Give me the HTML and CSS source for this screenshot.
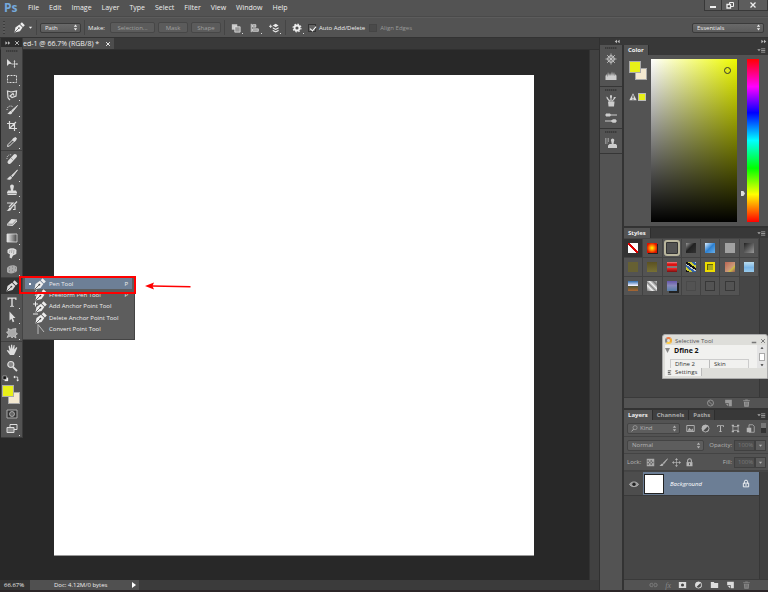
FILE: index.html
```html
<!DOCTYPE html>
<html lang="en">
<head>
<meta charset="utf-8">
<title>Photo editor</title>
<link rel="stylesheet" href="styles.css">
</head>
<body>
<svg class="sprite" aria-hidden="true">
  <symbol id="pen" viewBox="0 0 12 12"><path d="M.5 11.500 1.500 6 6 2.800 9.300 6 6.500 10Z" fill="currentColor"/><path d="M6.700 2.300 8.600.3 11.800 3.500 9.900 5.400Z" fill="currentColor"/><path d="M1 11 5 7" stroke="#444" stroke-width=".8"/><circle cx="5.400" cy="6.600" r=".9" fill="#444"/></symbol>
  <symbol id="move" viewBox="0 0 12 12"><path d="M1 2v7l2-2 3-.3Z" fill="currentColor"/><path d="M8.500 4v6M5.500 7h6" stroke="currentColor" stroke-width=".8"/><path d="m8.500 3 1 1.500h-2Zm0 8 1-1.500h-2ZM12 7l-1.500 1V6Z" fill="currentColor"/></symbol>
  <symbol id="marquee" viewBox="0 0 12 12"><path d="M1.500 2.500h9v7h-9Z" fill="none" stroke="currentColor" stroke-dasharray="2 1"/></symbol>
  <symbol id="lasso" viewBox="0 0 12 12"><path d="m2 9-.5-7 3.500 1 5.500-1-.5 5-4 1.500L4 7l3-2.500 1 2M2 9l2 2" fill="none" stroke="currentColor" stroke-width="1.200"/></symbol>
  <symbol id="quick" viewBox="0 0 12 12"><path d="m11.500 1.500-6 5.200 1 1.200Z" fill="currentColor" stroke="currentColor" stroke-width=".9"/><path d="M1 9.500c2 .2 1.800-2.500 4-2.500l1.500 1.500C5.500 10.800 3 10.700 1 9.500Z" fill="currentColor"/><path d="M1 6c0-4 4-5 6-3" fill="none" stroke="currentColor" stroke-dasharray="1 1"/></symbol>
  <symbol id="crop" viewBox="0 0 12 12"><path d="M3.500 1v7.500H11M1 3.500h7.500V11M4 8l6-6" fill="none" stroke="currentColor" stroke-width="1.200"/></symbol>
  <symbol id="dropper" viewBox="0 0 12 12"><path d="m1.500 10.500.5-2L6.500 4 8 5.500 3.500 10Z" fill="none" stroke="currentColor"/><path d="M6 3.500 8.500 6l1-1 .5-.5 1-2-1.500-1.500-2 1Z" fill="currentColor"/></symbol>
  <symbol id="heal" viewBox="0 0 12 12"><path d="m3.500 9 5.500-6" stroke="currentColor" stroke-width="4" stroke-linecap="round"/><path d="m5 5 2.700 2.500" stroke="#888" stroke-dasharray="1 .7"/><path d="M1 6c-.5-3 2-5 5-4" fill="none" stroke="currentColor" stroke-width=".8" stroke-dasharray="1 1"/></symbol>
  <symbol id="brush" viewBox="0 0 12 12"><path d="m11.500 1-6 5.700 1 1Z" fill="currentColor" stroke="currentColor" stroke-width=".9"/><path d="M.5 10c2 0 2-2.700 4.300-2.700l1.200 1.200C5.500 11 2.500 11.400.5 10Z" fill="currentColor"/></symbol>
  <symbol id="stamp" viewBox="0 0 12 12"><path d="M4.200 3a1.900 1.900 0 1 1 3.600 0L7 6.500h3l1 2v1H1v-1l1-2h3ZM1.500 10h9v1h-9Z" fill="currentColor"/></symbol>
  <symbol id="history" viewBox="0 0 12 12"><path d="M11 1.500 5 8M1 3h6L3 7M9 5v4.500H7" fill="none" stroke="currentColor" stroke-width="1.200"/><path d="M.5 10.500c2 0 2-3 4-3l1.200 1c-1 2.500-3 3-5.200 2Z" fill="currentColor"/></symbol>
  <symbol id="eraser" viewBox="0 0 12 12"><path d="m1 8 4.500-5 5.500.5v2L6.500 10 1 9.500Z" fill="currentColor"/><path d="m1.500 8 5 .3L10.500 4" fill="none" stroke="#666" stroke-width=".7"/></symbol>
  <symbol id="gradient" viewBox="0 0 12 12"><linearGradient id="gg"><stop stop-color="#eee"/><stop offset="1" stop-color="#444"/></linearGradient><path d="M1 2h10v8H1Z" fill="url(#gg)" stroke="#ddd" stroke-width=".8"/></symbol>
  <symbol id="smudge" viewBox="0 0 12 12"><path d="M1.500 3C3 .5 9 .5 10.500 3L10.300 7 7 8.500 5.500 11.500l-2-1L4 7.500 1.500 6Z" fill="currentColor"/><path d="m4 3-.5 3M6 2.500 5.500 6M8 3l-.5 4" stroke="#777" stroke-width=".5"/></symbol>
  <symbol id="sponge" viewBox="0 0 12 12"><path d="M1 5c1-3 8-4 10-1v4c-2 3-9 3-10 1Z" fill="#aaa"/><path d="M3 5h1M6 4h1M9 5h1M3 8h1M6 7h1M8 9h1" stroke="#777"/></symbol>
  <symbol id="type" viewBox="0 0 12 12"><path d="M1.500 1.500h9V4h-1L9 2.700H6.700v7l1.300.3v.8H4V10l1.300-.3v-7H3L2.500 4h-1Z" fill="currentColor"/></symbol>
  <symbol id="select" viewBox="0 0 12 12"><path d="M3.500.5v9.200l2-1.900 1.200 3.400 1.600-.7L6.900 7H9.500Z" fill="currentColor"/></symbol>
  <symbol id="shape" viewBox="0 0 12 12"><path d="m2 1.500 3 1.500 1.500-1L10 1.500 9.500 5l2 2-2 1 .5 3-2.500-1.500L6 11 4.500 9 1 10.500l1.500-3L.5 5l2-.5Z" fill="#aaa" stroke="currentColor" stroke-width=".6"/></symbol>
  <symbol id="hand" viewBox="0 0 12 12"><path d="M4 11 .7 6.500 2 6l1.500 1.500L2.500 2l1-.5L4.800 5 5 .8h1.200L6.500 5l1.200-4 1 .3-.4 4.200L10.500 3l.8.7L9.500 8 8 11Z" fill="currentColor"/></symbol>
  <symbol id="zoom" viewBox="0 0 12 12"><circle cx="4.800" cy="4.500" r="3" fill="#888" stroke="currentColor" stroke-width="1.200"/><path d="m7 7 4 4" stroke="currentColor" stroke-width="1.800"/></symbol>
  <symbol id="mask" viewBox="0 0 12 12"><path d="M1 2h10v8H1Z" fill="#333" stroke="#aaa"/><circle cx="6" cy="6" r="2.500" fill="#666" stroke="#ccc" stroke-width=".7"/></symbol>
  <symbol id="screen" viewBox="0 0 12 12"><path d="M4 1.500h7v5H4Z" fill="#555" stroke="currentColor"/><path d="M1 4.500h7v5H1Z" fill="#888" stroke="currentColor"/></symbol>
  <symbol id="swap" viewBox="0 0 12 12"><path d="M3 3.500h5v5" fill="none" stroke="currentColor" stroke-width="1.300"/><path d="M3.500 1v5L.5 3.500ZM5.500 8h5L8 11Z" fill="currentColor"/></symbol>
  <symbol id="defaults" viewBox="0 0 12 12"><path d="M4.500 4.500h6v6h-6Z" fill="#eee"/><path d="M1.500 1.500h6v6h-6Z" fill="#111" stroke="#ccc"/></symbol>
  <symbol id="combine" viewBox="0 0 12 12"><path d="M1 1.500h6.500V8H1Z" fill="#ccc"/><path d="M4.500 4.500H11V11H4.500Z" fill="#999" stroke="#eee" stroke-width=".8"/></symbol>
  <symbol id="align" viewBox="0 0 12 12"><path d="M1.500 1v10" stroke="currentColor"/><path d="M3 2h4v3H3ZM3 7h7v3H3Z" fill="#999" stroke="currentColor" stroke-width=".8"/></symbol>
  <symbol id="arrange" viewBox="0 0 12 12"><path d="M0 4h4M2 2v4" stroke="currentColor"/><path d="m8 1 3.500 2L8 5 4.500 3ZM4.500 5 8 7l3.500-2v1.500L8 8.500l-3.500-2ZM4.500 8 8 10l3.500-2v1.500L8 11.500l-3.500-2Z" fill="currentColor"/></symbol>
  <symbol id="gear" viewBox="0 0 12 12"><circle cx="6" cy="6" r="3" fill="none" stroke="currentColor" stroke-width="2.200"/><circle cx="6" cy="6" r="4.700" fill="none" stroke="currentColor" stroke-width="1.400" stroke-dasharray="1.850 1.840"/></symbol>
  <symbol id="updown" viewBox="0 0 6 8"><path d="m3 .5 2 2.500H1ZM3 7.500 1 5h4Z" fill="currentColor"/></symbol>
  <symbol id="down" viewBox="0 0 6 8"><path d="M1 3h4L3 5.500Z" fill="currentColor"/></symbol>
  <symbol id="close" viewBox="0 0 8 8"><path d="m1.500 1.500 5 5m0-5-5 5" stroke="currentColor" stroke-width="1.300"/></symbol>
  <symbol id="minimize" viewBox="0 0 8 8"><path d="M1 5h6v2H1Z" fill="currentColor"/></symbol>
  <symbol id="restore" viewBox="0 0 8 8"><path d="M3.500 1.500h4v4h-4Z" fill="none" stroke="currentColor"/><path d="M1 3.500h3.500V7H1Z" fill="#444" stroke="currentColor" stroke-width="1.300"/></symbol>
  <symbol id="left2" viewBox="0 0 8 6"><path d="M4 .8v4.400L1 3ZM7.500.8v4.400l-3-2.200Z" fill="currentColor"/></symbol>
  <symbol id="right2" viewBox="0 0 8 6"><path d="M.5.800v4.400l3-2.200ZM4 .800v4.400L7 3Z" fill="currentColor"/></symbol>
  <symbol id="panelmenu" viewBox="0 0 10 6"><path d="M0 1.500h4L2 4Z" fill="currentColor"/><path d="M4.500 1h5M4.500 3h5M4.500 5h5" stroke="currentColor" stroke-width="1"/></symbol>
  <symbol id="wheel" viewBox="0 0 12 12"><circle cx="6" cy="6" r="3.300" fill="none" stroke="currentColor"/><path d="M6 .5v11M.5 6h11M2.100 2.100l7.800 7.800M9.900 2.100 2.100 9.900" stroke="currentColor" stroke-width=".8"/></symbol>
  <symbol id="histogram" viewBox="0 0 12 12"><path d="M.5 10V6L1.500 4l.7 3L3 2l1 4 1-3 1 3 1-4.500L8 6l1-4 .8 4 1-2 .7 2v4Z" fill="currentColor"/></symbol>
  <symbol id="brushes" viewBox="0 0 12 12"><path d="M3 6.500h6.500l-.5 5H3.500Z" fill="currentColor"/><path d="m5 6.500-3-3.500M6 6.500V1M7 6.500 9.500 3" stroke="currentColor" stroke-width="1.200"/><path d="M.8 1.500 3 2.500 2.500 4ZM5 .3h2v2.500H5ZM8.500 2h2.500L9.500 4.500Z" fill="currentColor"/></symbol>
  <symbol id="sliders" viewBox="0 0 12 12"><path d="M0 3h12M0 9h12" stroke="currentColor"/><path d="M1 1.500h4l1 1.500-1 1.500H1ZM6 9c1-2 3-2 5-1.500v3C9 11 7 11 6 9Z" fill="currentColor"/></symbol>
  <symbol id="clone" viewBox="0 0 12 12"><path d="M6.200 4.300a1.700 1.700 0 1 1 2.800 0L8.500 7H11l1 1.500V11H3V8.500L4.500 7H6.800Z" fill="currentColor"/><path d="M0 2h4M0 4h4M0 6h3" stroke="currentColor" stroke-dasharray="1 .5"/></symbol>
  <symbol id="warn" viewBox="0 0 12 12"><path d="M6 .5 11.500 11H.5Z" fill="#ddd"/><path d="M6 3.500v4M6 8.500V10" stroke="#222" stroke-width="1.400"/></symbol>
  <symbol id="none" viewBox="0 0 12 12"><circle cx="6" cy="6" r="4.500" fill="none" stroke="currentColor" stroke-width="1.300"/><path d="m3 3 6 6" stroke="currentColor" stroke-width="1.300"/></symbol>
  <symbol id="newitem" viewBox="0 0 12 12"><path d="M1 1h10v10H6.500V6.500H1Z" fill="currentColor"/><path d="M2 7.500h3.500V11Z" fill="currentColor"/></symbol>
  <symbol id="trash" viewBox="0 0 12 12"><path d="M1 2.500h10M4 1.500h4" stroke="currentColor" stroke-width="1.200"/><path d="M2 4h8l-.7 7.500H2.700Z" fill="currentColor"/><path d="M4.500 5v5M6 5v5M7.500 5v5" stroke="#505050" stroke-width=".5"/></symbol>
  <symbol id="image" viewBox="0 0 12 12"><path d="M1 2h10v8H1Z" fill="none" stroke="currentColor" stroke-width="1.200"/><path d="m2 9 2.500-4L7 8l1.500-2L10 9Z" fill="currentColor"/></symbol>
  <symbol id="adjust" viewBox="0 0 12 12"><circle cx="6" cy="6" r="5" fill="currentColor"/><path d="M9.500 2.500a5 5 0 0 1-7 7Z" fill="#4b4b4b"/><circle cx="6" cy="6" r="4.500" fill="none" stroke="currentColor"/></symbol>
  <symbol id="vector" viewBox="0 0 12 12"><path d="M2.500 2v8m7-8v8M2.500 3.500h7m-7 5h7" stroke="currentColor"/><path d="M1 1h3v2H1ZM8 1h3v2H8ZM1 9h3v2H1ZM8 9h3v2H8Z" fill="currentColor"/></symbol>
  <symbol id="smart" viewBox="0 0 12 12"><path d="M4 1h5l2 2v8H4Z" fill="none" stroke="currentColor"/><path d="M1 5h6v6H1Z" fill="currentColor"/></symbol>
  <symbol id="search" viewBox="0 0 12 12"><circle cx="7" cy="4.500" r="3.500" fill="none" stroke="currentColor"/><path d="M4.500 7 1 11" stroke="currentColor" stroke-width="1.500"/></symbol>
  <symbol id="checker" viewBox="0 0 12 12"><path d="M1 1h10v10H1Z" fill="#aaa"/><path d="M2 3h2v2H2Zm4 0h2v2H6ZM4 5h2v2H4Zm4 0h2v2H8ZM2 7h2v2H2Zm4 0h2v2H6Z" fill="#666"/></symbol>
  <symbol id="cross" viewBox="0 0 12 12"><path d="M6 2v8M2 6h8" stroke="currentColor" stroke-width=".9"/><path d="m6 0 2 2.500H4Zm0 12L4 9.500h4ZM0 6l2.500-2v4Zm12 0L9.500 8V4Z" fill="currentColor"/></symbol>
  <symbol id="lock" viewBox="0 0 12 12"><path d="M3.500 6V3.500a2.500 2.500 0 0 1 5 0V6" fill="none" stroke="currentColor" stroke-width="1.400"/><path d="M2 5.500h8V11H2Z" fill="currentColor"/><path d="M6 7v2.500" stroke="#555" stroke-width="1.300"/></symbol>
  <symbol id="padlock" viewBox="0 0 12 12"><path d="M3.500 6V3.500a2.500 2.500 0 0 1 5 0V6M2 5.500h8V11H2Z" fill="none" stroke="currentColor" stroke-width="1.300"/><path d="M6 7v2.500" stroke="currentColor" stroke-width="1.500"/></symbol>
  <symbol id="eye" viewBox="0 0 12 12"><path d="M.5 6.500C3 2.500 9 2.500 11.500 6.500 9 10 3 10 .5 6.500Z" fill="#999" stroke="#ccc" stroke-width=".8"/><circle cx="6" cy="6.300" r="2" fill="#222"/></symbol>
  <symbol id="link" viewBox="0 0 12 12"><path d="M5 3.500H3a2.500 2.500 0 0 0 0 5h2m2-5h2a2.500 2.500 0 0 1 0 5H7M3.500 6h5" fill="none" stroke="currentColor" stroke-width="1.200"/></symbol>
  <symbol id="addmask" viewBox="0 0 12 12"><path d="M.5 1.500h11v9H.5Z" fill="currentColor"/><circle cx="6" cy="6" r="2.300" fill="#444"/></symbol>
  <symbol id="folder" viewBox="0 0 12 12"><path d="M.5 1.500H5L6 3h5.500v7.500H.5Z" fill="currentColor"/></symbol>
  <symbol id="penplus" viewBox="0 0 14 12"><use href="#pen" x="2" width="12" height="12"/><path d="M0 3h5M2.500.5v5" stroke="currentColor"/></symbol>
  <symbol id="penminus" viewBox="0 0 14 12"><use href="#pen" x="2" width="12" height="12"/><path d="M0 2h5" stroke="currentColor"/></symbol>
  <symbol id="penfree" viewBox="0 0 14 12"><use href="#pen" x="2" width="12" height="12"/><path d="M4 1C1 3 5 4 2 7" fill="none" stroke="currentColor" stroke-width=".8"/></symbol>
  <symbol id="convert" viewBox="0 0 14 12"><path d="M5 11V1.500L11 9" fill="none" stroke="#bbb"/></symbol>
</svg>

<div class="app">
  <header class="menubar">
    <span class="logo">Ps</span>
    <nav class="menus" aria-label="Main menu">
      <button>File</button><button>Edit</button><button>Image</button><button>Layer</button><button>Type</button><button>Select</button><button>Filter</button><button>View</button><button>Window</button><button>Help</button>
    </nav>
    <div class="window-buttons">
      <button aria-label="Minimize"><svg><use href="#minimize"/></svg></button>
      <button aria-label="Restore"><svg><use href="#restore"/></svg></button>
      <button class="wide" aria-label="Close"><svg><use href="#close"/></svg></button>
    </div>
  </header>

  <div class="options">
    <span class="grip-v"></span>
    <button class="icon current" aria-label="Pen"><svg><use href="#pen"/></svg></button>
    <svg class="drop"><use href="#down"/></svg>
    <span class="divider"></span>
    <span class="select mode"><select aria-label="Mode"><option>Path</option></select><svg><use href="#updown"/></svg></span>
    <span class="divider"></span>
    <span class="make">Make:</span>
    <button class="push large">Selection...</button>
    <button class="push">Mask</button>
    <button class="push">Shape</button>
    <span class="divider"></span>
    <button class="icon has-more" aria-label="Path operations"><svg><use href="#combine"/></svg></button>
    <button class="icon has-more" aria-label="Path alignment"><svg><use href="#align"/></svg></button>
    <button class="icon has-more" aria-label="Path arrangement"><svg><use href="#arrange"/></svg></button>
    <span class="divider"></span>
    <button class="icon has-more" aria-label="Settings"><svg><use href="#gear"/></svg></button>
    <label class="check"><input type="checkbox" checked>Auto Add/Delete</label>
    <label class="check muted"><input type="checkbox" disabled>Align Edges</label>
    <span class="select workspace"><select aria-label="Workspace"><option>Essentials</option></select><svg><use href="#updown"/></svg></span>
  </div>

  <div class="workspace-area">
    <main class="document">
      <div class="tabs"><div class="doc-tab"><span>ed-1 @ 66.7% (RGB/8) *</span><button aria-label="Close tab"><svg><use href="#close"/></svg></button></div></div>
      <div class="stage"><div class="pasteboard"><div class="canvas"></div></div><div class="scroll-y"></div></div>
      <footer class="status"><span class="percent">66.67%</span><span class="docsize">Doc: 4.12M/0 bytes</span><button aria-label="Status menu"><svg viewBox="0 0 6 8"><path d="m1 1 4 3-4 3Z" fill="#fff"/></svg></button></footer>

      <aside class="toolbox" aria-label="Tools">
        <div class="toolbox-head"><svg><use href="#right2"/></svg><svg><use href="#close"/></svg></div>
        <div class="grip-h"></div>
        <div class="tools six">
          <button aria-label="Move"><svg><use href="#move"/></svg></button>
          <button class="has-more" aria-label="Marquee"><svg><use href="#marquee"/></svg></button>
          <button class="has-more" aria-label="Lasso"><svg><use href="#lasso"/></svg></button>
          <button class="has-more" aria-label="Quick selection"><svg><use href="#quick"/></svg></button>
          <button class="has-more" aria-label="Crop"><svg><use href="#crop"/></svg></button>
          <button class="has-more" aria-label="Eyedropper"><svg><use href="#dropper"/></svg></button>
        </div>
        <div class="tools eight">
          <button class="has-more" aria-label="Healing brush"><svg><use href="#heal"/></svg></button>
          <button class="has-more" aria-label="Brush"><svg><use href="#brush"/></svg></button>
          <button class="has-more" aria-label="Clone stamp"><svg><use href="#stamp"/></svg></button>
          <button class="has-more" aria-label="History brush"><svg><use href="#history"/></svg></button>
          <button class="has-more" aria-label="Eraser"><svg><use href="#eraser"/></svg></button>
          <button class="has-more" aria-label="Gradient"><svg><use href="#gradient"/></svg></button>
          <button class="has-more" aria-label="Smudge"><svg><use href="#smudge"/></svg></button>
          <button class="has-more" aria-label="Sponge"><svg><use href="#sponge"/></svg></button>
        </div>
        <div class="tools four">
          <button class="has-more active" aria-label="Pen"><svg><use href="#pen"/></svg></button>
          <button class="has-more" aria-label="Type"><svg><use href="#type"/></svg></button>
          <button class="has-more" aria-label="Path selection"><svg><use href="#select"/></svg></button>
          <button class="has-more" aria-label="Custom shape"><svg><use href="#shape"/></svg></button>
        </div>
        <div class="tools two">
          <button class="has-more" aria-label="Hand"><svg><use href="#hand"/></svg></button>
          <button aria-label="Zoom"><svg><use href="#zoom"/></svg></button>
        </div>
        <div class="mini"><svg><use href="#defaults"/></svg><svg><use href="#swap"/></svg></div>
        <div class="swatches"><button class="back" aria-label="Background colour"></button><button class="fore" aria-label="Foreground colour"></button></div>
        <div class="tools modes">
          <button aria-label="Quick mask"><svg><use href="#mask"/></svg></button>
          <button class="has-more" aria-label="Screen mode"><svg><use href="#screen"/></svg></button>
        </div>
      </aside>

      <div class="flyout" role="menu">
        <button class="chosen" role="menuitem"><i></i><svg><use href="#pen"/></svg><span>Pen Tool</span><kbd>P</kbd></button>
        <button role="menuitem"><i></i><svg><use href="#penfree"/></svg><span>Freeform Pen Tool</span><kbd>P</kbd></button>
        <button role="menuitem"><i></i><svg><use href="#penplus"/></svg><span>Add Anchor Point Tool</span></button>
        <button role="menuitem"><i></i><svg><use href="#penminus"/></svg><span>Delete Anchor Point Tool</span></button>
        <button role="menuitem"><i></i><svg><use href="#convert"/></svg><span>Convert Point Tool</span></button>
      </div>
      <div class="callout"></div>
      <svg class="callout-arrow" viewBox="0 0 46 8"><path d="M7 3.300 45.500 4v1.500L7 4.700Z" fill="#f00"/><path d="m0 4 9-3.500L7.500 4 9 7.500Z" fill="#f00"/></svg>
    </main>

    <section class="side">
      <div class="side-head"><svg><use href="#left2"/></svg><svg><use href="#right2"/></svg></div>
      <div class="side-body">
        <div class="dock">
          <div class="dock-group"><div class="grip-h"></div><button aria-label="Navigator"><svg><use href="#wheel"/></svg></button><button aria-label="Histogram"><svg><use href="#histogram"/></svg></button></div>
          <div class="dock-group"><div class="grip-h"></div><button aria-label="Brush presets"><svg><use href="#brushes"/></svg></button><button aria-label="Brush settings"><svg><use href="#sliders"/></svg></button></div>
          <div class="dock-group single"><div class="grip-h"></div><button aria-label="Clone source"><svg><use href="#clone"/></svg></button></div>
        </div>
        <div class="panels">
          <section class="panel color">
            <div class="panel-tabs"><button class="on">Color</button><svg><use href="#panelmenu"/></svg></div>
            <div class="color-body">
              <div class="color-left">
                <div class="swatches"><button class="back" aria-label="Background colour"></button><button class="fore" aria-label="Foreground colour"></button></div>
                <div class="gamut"><svg><use href="#warn"/></svg><span></span></div>
              </div>
              <div class="field"><span class="ring"></span></div>
              <div class="hue"><span class="pointer"></span></div>
            </div>
          </section>
          <section class="panel styles">
            <div class="panel-tabs"><button class="on">Styles</button><svg><use href="#panelmenu"/></svg></div>
            <div class="styles-body">
              <div class="style-grid">
                <button class="s-none" aria-label="None"><i></i></button><button class="s-sun" aria-label="Sun"><i></i></button><button class="s-frame" aria-label="Frame"><i></i></button><button class="s-dark" aria-label="Dark"><i></i></button><button class="s-blue" aria-label="Blue"><i></i></button><button class="s-grey" aria-label="Grey"><i></i></button><button class="s-shade" aria-label="Shade"><i></i></button>
                <button class="s-olive" aria-label="Olive"><i></i></button><button class="s-moss" aria-label="Moss"><i></i></button><button class="s-red" aria-label="Red"><i></i></button><button class="s-camo" aria-label="Camo"><i></i></button><button class="s-gold" aria-label="Gold"><i></i></button><button class="s-clay" aria-label="Clay"><i></i></button><button class="s-sky" aria-label="Sky"><i></i></button>
                <button class="s-land" aria-label="Landscape"><i></i></button><button class="s-metal" aria-label="Metal"><i></i></button><button class="s-violet" aria-label="Violet"><i></i></button><button class="s-flat" aria-label="Flat"><i></i></button><button class="s-line" aria-label="Outline"><i></i></button><button class="s-line" aria-label="Thin outline"><i></i></button>
              </div>
              <div class="gutter"></div>
            </div>
            <div class="panel-foot right muted"><svg><use href="#none"/></svg><svg><use href="#newitem"/></svg><svg><use href="#trash"/></svg></div>
          </section>
          <section class="panel layers">
            <div class="panel-tabs"><button class="on">Layers</button><button>Channels</button><button>Paths</button><svg><use href="#panelmenu"/></svg></div>
            <div class="row">
              <span class="select kind"><svg class="lens"><use href="#search"/></svg><select aria-label="Filter kind"><option>Kind</option></select><svg><use href="#updown"/></svg></span>
              <div class="filters"><svg><use href="#image"/></svg><svg><use href="#adjust"/></svg><svg><use href="#type"/></svg><svg><use href="#vector"/></svg><svg><use href="#smart"/></svg></div>
              <span class="toggle"></span>
            </div>
            <div class="row">
              <span class="select blend"><select aria-label="Blend mode"><option>Normal</option></select><svg><use href="#updown"/></svg></span>
              <label class="amount">Opacity:<input value="100%"></label><button class="step" aria-label="Opacity slider"><svg><use href="#down"/></svg></button>
            </div>
            <div class="row">
              <span>Lock:</span>
              <div class="locks"><svg><use href="#checker"/></svg><svg><use href="#brush"/></svg><svg><use href="#cross"/></svg><svg><use href="#lock"/></svg></div>
              <label class="amount">Fill:<input value="100%"></label><button class="step" aria-label="Fill slider"><svg><use href="#down"/></svg></button>
            </div>
            <div class="layer-area">
              <div class="layer-list">
                <div class="layer"><button class="eye" aria-label="Visibility"><svg><use href="#eye"/></svg></button><div class="layer-main"><span class="thumb"></span><em>Background</em><svg><use href="#padlock"/></svg></div></div>
              </div>
              <div class="gutter"></div>
            </div>
            <div class="panel-foot"><svg class="dim"><use href="#link"/></svg><em class="dim">fx</em><svg><use href="#addmask"/></svg><svg><use href="#adjust"/></svg><svg><use href="#folder"/></svg><svg><use href="#newitem"/></svg><svg class="dim"><use href="#trash"/></svg></div>
          </section>

          <div class="plugin">
            <div class="plugin-title"><span class="dot"></span><span>Selective Tool</span><svg><use href="#minimize"/></svg><svg><use href="#close"/></svg></div>
            <div class="plugin-body">
              <div class="plugin-main"><div class="plugin-name"><i></i><b>Dfine 2</b></div><div class="plugin-row"><span>Dfine 2</span><span>Skin</span></div></div>
              <div class="plugin-scroll"><svg viewBox="0 0 6 8"><path d="M1 5h4L3 2.500Z" fill="#333"/></svg><span></span><svg><use href="#down"/></svg></div>
            </div>
            <div class="plugin-foot"><button><svg viewBox="0 0 6 8"><path d="M1 2h4M1 4h3M1 6h4" stroke="#444"/></svg>Settings</button></div>
          </div>
        </div>
      </div>
    </section>
  </div>
  <div class="edge"></div>
</div>
</body>
</html>
```
FILE: styles.css
```css
* { box-sizing: border-box; }
html, body { height: 100%; }
body {
  margin: 0;
  background: #535353;
  color: #eee;
  font: 6px/8px "Open Sans", "Noto Sans", sans-serif;
  overflow: hidden;
}
button, input, select { margin: 0; padding: 0; border: 0; background: none; color: inherit; font: inherit; appearance: none; }
svg { display: block; flex: none; width: 10px; height: 10px; }
.sprite { position: absolute; width: 0; height: 0; }
.app { display: flex; flex-direction: column; height: 100vh; }

/* Menu bar */
.menubar { display: flex; flex: none; height: 17px; align-items: center; padding-left: 4px; border-bottom: 1px solid #4a4a4a; font-size: 7px; }
.logo { width: 24px; color: #75a9dc; font: bold 12px/16px "Open Sans", sans-serif; }
.menus { display: flex; gap: 10px; color: #eee; }
.window-buttons { display: flex; align-self: flex-start; gap: 1px; margin-left: auto; padding: 0 1px 1px; background: #383838; }
.window-buttons button { display: grid; place-items: center; width: 16px; height: 10px; background: #5d5d5d; color: #eee; }
.window-buttons .wide { width: 28px; }
.window-buttons svg { width: 8px; height: 8px; }

/* Options bar */
.options { display: flex; flex: none; align-items: center; gap: 3px; height: 21px; padding: 0 4px 0 3px; border-top: 1px solid #5c5c5c; border-bottom: 1px solid #333; }
.grip-v { width: 2px; height: 13px; margin-right: 5px; background: repeating-linear-gradient(#3c3c3c 0 1px, #5a5a5a 1px 3px); }
.divider { width: 1px; height: 15px; background: #454545; }
.drop { width: 5px; height: 7px; }
.icon { position: relative; display: grid; place-items: center; width: 16px; height: 12px; }
.icon.current { width: 12px; }
.icon.current svg { width: 11px; height: 11px; }
.has-more::after { content: ""; position: absolute; right: 2px; bottom: 1px; width: 1px; height: 1px; background: #ddd; }
.options .has-more::after { right: 1px; bottom: 0; }
.select { position: relative; display: flex; align-items: center; height: 10px; border: 1px solid #3b3b3b; border-radius: 2px; background: linear-gradient(#696969, #5b5b5b); }
.select select { width: 100%; padding-left: 4px; line-height: 8px; }
.select svg { position: absolute; right: 2px; width: 5px; height: 7px; }
.mode { width: 41px; }
.workspace { width: 72px; margin-left: auto; }
.make { width: 19px; }
.push { width: 30px; height: 11px; border: 1px solid #474747; border-radius: 2px; background: #5b5b5b; color: #a0a0a0; }
.push.large { width: 45px; }
.check { display: flex; align-items: center; gap: 3px; }
.check input { width: 8px; height: 8px; border: 1px solid #333; background: #646464; }
.check input:checked { position: relative; }
.check input:checked::after { content: ""; position: absolute; left: 2px; top: 0; width: 3px; height: 5px; border: solid #fff; border-width: 0 1px 1px 0; transform: rotate(40deg); }
.check.muted { margin-left: 1px; color: #999; }
.check.muted input { background: #4a4a4a; border-color: #454545; }

/* Document */
.workspace-area { display: flex; flex: 1; min-height: 0; }
.document { position: relative; display: flex; flex-direction: column; flex: 1; min-width: 0; border-right: 1px solid #303030; background: #282828; }
.tabs { height: 12px; flex: none; padding-left: 23px; background: #393939; border-bottom: 1px solid #303030; }
.doc-tab { display: flex; width: max-content; align-items: center; gap: 6px; height: 11px; padding-right: 3px; background: #4d4d4d; font-size: 7px; line-height: 11px; }
.doc-tab svg { width: 6px; height: 6px; }
.stage { display: flex; flex: 1; min-height: 0; }
.pasteboard { flex: 1; padding: 25px 55px 24px 54px; }
.canvas { height: 100%; background: #fff; border-bottom: 1px solid #999; }
.scroll-y { width: 10px; background: #414141; border-left: 1px solid #333; }
.status { display: flex; flex: none; height: 10px; align-items: stretch; line-height: 10px; background: #3b3b3b; }
.percent { width: 30px; padding-left: 4px; background: #333; }
.docsize { width: 101px; padding-left: 24px; background: #505050; }
.status button { width: 8px; background: #505050; }
.status svg { width: 6px; height: 8px; }

/* Toolbox */
.toolbox { position: absolute; left: 1px; top: 0; width: 22px; background: #535353; border-right: 1px solid #3b3b3b; border-bottom: 1px solid #3b3b3b; }
.toolbox-head { display: flex; justify-content: space-between; align-items: center; height: 9px; padding: 0 2px 0 4px; background: #2c2c2c; color: #bbb; }
.toolbox-head svg { width: 6px; height: 6px; }
.grip-h { width: 12px; height: 2px; margin: 3px auto; background: repeating-linear-gradient(90deg, #3b3b3b 0 1px, #484848 1px 2px); }
.tools { display: grid; grid-auto-rows: 1fr; color: #ddd; }
.tools + .tools { border-top: 1px solid #3f3f3f; }
.tools button { position: relative; display: grid; place-items: center; min-height: 0; }
.tools svg { width: 12px; height: 12px; }
.six { height: 95px; }
.eight { height: 127px; }
.four { height: 64px; }
.two { height: 33px; }
.modes { height: 31px; }
.tools .active { background: #333; }
.mini { display: flex; justify-content: space-between; height: 9px; padding: 1px 2px 0 1px; }
.mini svg { width: 7px; height: 7px; }
.swatches { position: relative; width: 18px; height: 20px; margin: 2px 0 1px 1px; }
.swatches button { position: absolute; width: 12px; height: 12px; border: 1px solid #aaa; }
.swatches .fore { left: 0; top: 0; background: #e8f018; }
.swatches .back { right: 0; bottom: 1px; background: #f3e8d0; }

/* Pen tool menu */
.flyout { position: absolute; left: 22px; top: 238px; display: grid; grid-auto-rows: 1fr; width: 113px; height: 64px; padding: 1px 2px 4px; background: #5d5d5d; border: 1px solid #444; }
.flyout button { display: flex; align-items: center; gap: 3px; min-height: 0; padding: 0 4px; text-align: left; line-height: 8px; }
.flyout svg { width: 14px; height: 12px; margin-left: -1px; }
.flyout i { width: 2px; height: 2px; }
.flyout span { white-space: nowrap; margin-left: -1px; }
.flyout .chosen { background: #6d7f96; }
.flyout .chosen i { background: #fff; }
kbd { margin-left: auto; font: inherit; }
.callout { position: absolute; left: 19px; top: 238px; width: 117px; height: 18px; border: 2px solid #f00; }
.callout-arrow { position: absolute; left: 145px; top: 244px; width: 46px; height: 8px; }

/* Side area */
.side { display: flex; flex-direction: column; width: 168px; }
.side-head { display: flex; flex: none; justify-content: space-between; align-items: center; height: 7px; padding: 0 1px 0 14px; background: #383838; color: #bbb; }
.side-head svg { width: 6px; height: 5px; }
.side-body { display: flex; flex: 1; min-height: 0; }
.dock { width: 24px; background: #535353; border-right: 2px solid #333; }
.dock-group { display: flex; flex-direction: column; align-items: center; height: 42px; border-bottom: 1px solid #363636; }
.dock-group.single { height: 25px; }
.dock-group .grip-h { margin: 2px auto 1px; }
.dock button { display: grid; place-items: center; height: 17px; color: #ccc; }
.dock svg { width: 12px; height: 12px; }
.panels { position: relative; display: flex; flex-direction: column; flex: 1; min-width: 0; }
.panel { flex: none; border-bottom: 2px solid #333; }
.panel-tabs { display: flex; align-items: center; height: 10px; padding-right: 2px; background: #383838; }
.panel-tabs button { height: 10px; padding: 0 4px; border-right: 1px solid #2e2e2e; color: #aaa; font-weight: bold; background: #404040; }
.panel-tabs .on { background: #535353; color: #eee; }
.panel-tabs svg { width: 9px; height: 5px; margin-left: auto; color: #aaa; }
.color-body { display: flex; height: 171px; padding: 4px 9px 4px 5px; background: #535353; }
.color-left { width: 22px; }
.color-left .swatches { margin-left: 0; }
.gamut { display: flex; align-items: center; gap: 1px; margin-top: 12px; }
.gamut svg { width: 8px; height: 8px; }
.gamut span { width: 8px; height: 8px; background: #e8f018; border: 1px solid #bbb; }
.field { position: relative; flex: 1; background: linear-gradient(to top, #000, transparent), linear-gradient(to right, #fff, #eefa00); }
.ring { position: absolute; right: 6px; top: 8px; width: 7px; height: 7px; border: 1px solid #333; border-radius: 50%; }
.hue { position: relative; width: 12px; margin-left: 10px; background: linear-gradient(#f00, #f0f 17%, #00f 33%, #0ff 50%, #0f0 67%, #ff0 83%, #f00); }
.pointer { position: absolute; left: -6px; top: 132px; width: 4px; height: 5px; background: #ddd; clip-path: polygon(0 0, 60% 0, 100% 50%, 60% 100%, 0 100%); }

/* Styles panel */
.styles-body { display: flex; height: 159px; background: #464646; }
.style-grid { display: grid; flex: 1; grid-template-columns: repeat(7, 1fr); grid-auto-rows: 19px; align-content: start; padding-top: 1px; }
.style-grid button { display: grid; place-items: center; border: solid #424242; border-width: 0 1px 1px 0; background: #535353; }
.style-grid i { width: 10px; height: 10px; }
.gutter { width: 9px; background: #404040; border-left: 1px solid #373737; }
.style-grid .s-none { background: #333; }
.s-none i { background: linear-gradient(45deg, #fff 43%, #d00 44% 56%, #fff 57%); }
.s-sun i { background: radial-gradient(#ff0, #f70 40%, #d10 75%); box-shadow: 1px 1px #222; }
.style-grid .s-frame i { width: 16px; height: 16px; border: 2px solid #bab69d; border-radius: 3px; box-shadow: inset 0 0 0 1px #333; }
.s-dark i { background: linear-gradient(135deg, #999, #222 45%, #333); }
.s-blue i { background: linear-gradient(135deg, #ddefff, #2d80d0 50%, #68aee8); }
.s-grey i { background: #a1a1a1; }
.s-shade i { background: linear-gradient(135deg, #222, #999); }
.s-olive i { background: #666033; }
.s-moss i { background: linear-gradient(#5b5122, #777034); }
.s-red i { background: linear-gradient(#e88, #d11 20% 40%, #877 45% 55%, #e22 65%, #711); }
.s-camo i { background: repeating-linear-gradient(35deg, #111 0 2px, #cc3 2px 4px, #36a 4px 6px, #ccc 6px 7px); }
.s-gold i { border: 2px solid #ed0; background: #aa2; box-shadow: inset 1px 1px #660; }
.s-clay i { background: linear-gradient(135deg, #b65, #c97 60%, #cb4 70%, #955); }
.s-sky i { background: linear-gradient(#bde, #7bb5e5 55%, #9ce); }
.s-land i { background: linear-gradient(#2d6bad, #eef 45%, #553 55%, #a63); }
.s-metal i { background: linear-gradient(45deg, #777, #eee 30%, #888 45%, #eee 60%, #777 80%, #ccc); }
.s-violet i { background: linear-gradient(#65a, #88b 45%, #557da5); box-shadow: 2px 2px #222; }
.s-flat i { border: 1px solid #4a4a4a; }
.s-line i { border: 1px solid #383838; }
.panel-foot { display: flex; flex: none; justify-content: flex-end; align-items: center; gap: 7px; height: 11px; padding-right: 17px; background: #535353; border-top: 1px solid #3a3a3a; }
.panel-foot svg { width: 9px; height: 8px; color: #ddd; }
.panel-foot.right { gap: 9px; }
.panel-foot.right svg { color: #999; }
.panel-foot .dim { color: #888; }
.panel-foot em { font: italic 8px/9px "Liberation Serif", serif; }

/* Layers panel */
.layers { display: flex; flex: 1; flex-direction: column; min-height: 0; border: 0; color: #b5b5b5; }
.layers .panel-tabs { flex: none; }
.row { display: flex; flex: none; align-items: center; height: 17px; padding: 0 2px 0 3px; background: #535353; border-bottom: 1px solid #444; }
.row .select { height: 11px; border-color: #444; background: #5d5d5d; }
.kind { width: 53px; }
.row .kind .lens { right: auto; left: 3px; width: 7px; height: 7px; }
.kind select { padding-left: 12px; }
.filters { display: flex; flex: 1; gap: 6px; padding-left: 6px; }
.filters svg, .locks svg { width: 9px; height: 9px; }
.toggle { width: 5px; height: 10px; background: linear-gradient(#777 50%, #333 50%); }
.blend { width: 77px; }
.amount { display: flex; align-items: center; gap: 2px; margin-left: auto; }
.amount input { width: 21px; height: 11px; padding-left: 3px; border: 1px solid #404040; background: #4e4e4e; color: #7a7a7a; }
.step { display: grid; place-items: center; width: 11px; height: 11px; border: 1px solid #404040; background: #5d5d5d; }
.step svg { width: 5px; height: 7px; }
.locks { display: flex; gap: 4px; padding-left: 5px; }
.layer-area { display: flex; flex: 1; min-height: 0; padding-top: 1px; background: #464646; }
.layer-list { flex: 1; }
.layer { display: flex; height: 24px; border-bottom: 1px solid #3a3a3a; }
.eye { display: grid; place-items: center; width: 19px; background: #4d4d4d; }
.layer-main { display: flex; flex: 1; align-items: center; padding: 0 9px 0 1px; background: #6c7e95; color: #fff; }
.thumb { width: 20px; height: 20px; border: 1px solid #222; background: #fff; }
.layer-main em { margin: 0 auto 0 6px; }
.layer-main svg { width: 8px; height: 9px; }

/* Floating plugin window */
.plugin { position: absolute; right: 0; top: 289px; width: 106px; padding: 1px 1px 2px 2px; background: #dededa; border: 1px solid #aaa; border-radius: 3px 3px 0 0; color: #555; }
.plugin-title { display: flex; align-items: center; gap: 3px; height: 9px; }
.plugin-title svg { width: 6px; height: 6px; color: #777; }
.plugin-title svg:nth-of-type(1) { margin-left: auto; }
.dot { width: 7px; height: 7px; border: 2px solid; border-color: #e74 #ea3 #fc4 #888; border-radius: 50%; }
.plugin-body { display: flex; height: 23px; background: #f1f1ef; }
.plugin-main { flex: 1; }
.plugin-name { display: flex; align-items: center; gap: 4px; height: 11px; color: #111; font-size: 7px; }
.plugin-name i { width: 5px; height: 5px; background: #888; clip-path: polygon(0 0, 100% 0, 50% 100%); }
.plugin-row { display: flex; margin: 3px 8px 0 5px; border: solid #ccc; border-width: 1px 1px 0; color: #333; }
.plugin-row span { flex: 1; padding-left: 4px; }
.plugin-row span + span { border-left: 1px solid #bbb; }
.plugin-scroll { display: flex; flex-direction: column; align-items: center; justify-content: space-between; width: 9px; background: #e4e4e4; color: #333; }
.plugin-scroll svg { width: 6px; height: 6px; }
.plugin-scroll span { width: 6px; height: 8px; border: 1px solid #aaa; background: #fff; }
.plugin-foot { height: 8px; }
.plugin-foot button { display: flex; align-items: center; gap: 3px; height: 8px; padding: 0 4px 0 2px; border-right: 1px solid #bbb; background: #f1f1ef; color: #333; }
.plugin-foot svg { width: 5px; height: 7px; }
.edge { flex: none; height: 2px; background: #2b2527; }
```
